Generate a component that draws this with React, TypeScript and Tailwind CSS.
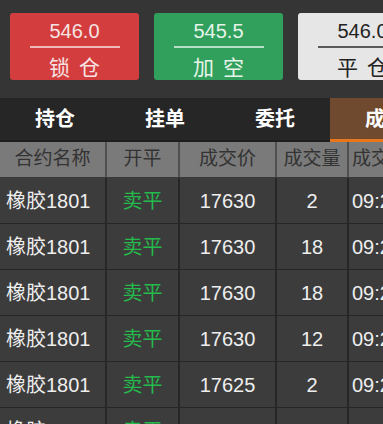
import React from 'react'

const font = { fontFamily: '"Liberation Sans", "Noto Sans CJK SC", sans-serif' }

const buttons = [
  { price: '546.0', label: '锁仓', box: 'bg-[#d43d3d] text-[#f6e4e4]', line: 'bg-[#efb9b9]' },
  { price: '545.5', label: '加空', box: 'bg-[#31a05c] text-[#e6f4ea]', line: 'bg-[#b8e0c6]' },
  { price: '546.0', label: '平仓', box: 'bg-[#e6e6e6] text-[#222222]', line: 'bg-[#5a5a5a]' },
]

const tabs = ['持仓', '挂单', '委托', '成交']

const cols = [
  { title: '合约名称', w: 'w-[107px]' },
  { title: '开平', w: 'w-[73px]' },
  { title: '成交价', w: 'w-[97px]' },
  { title: '成交量', w: 'w-[72px]' },
  { title: '成交时间', w: 'w-[110px]' },
]

const rows = [
  { name: '橡胶1801', side: '卖平', price: '17630', vol: '2', time: '09:21:05' },
  { name: '橡胶1801', side: '卖平', price: '17630', vol: '18', time: '09:21:05' },
  { name: '橡胶1801', side: '卖平', price: '17630', vol: '18', time: '09:21:05' },
  { name: '橡胶1801', side: '卖平', price: '17630', vol: '12', time: '09:21:05' },
  { name: '橡胶1801', side: '卖平', price: '17625', vol: '2', time: '09:21:04' },
  { name: '橡胶1801', side: '卖平', price: '17625', vol: '5', time: '09:21:04' },
]

export default function App() {
  return (
    <div className="w-[383px] h-[424px] overflow-hidden bg-[#353535]" style={font}>
      {/* 操作按钮 */}
      <div className="flex gap-[15px] pl-[10px] pt-[13px] h-[98px]">
        {buttons.map((b, i) => (
          <div key={i} className={`shrink-0 w-[129px] h-[67px] rounded-[3px] flex flex-col items-center ${b.box}`}>
            <div className="text-[20px] leading-none mt-[8px]">{b.price}</div>
            <div className={`w-[90px] h-[2px] mt-[5px] ${b.line}`}></div>
            <div className="text-[21px] leading-none mt-[9px] tracking-[9px] pl-[9px]">{b.label}</div>
          </div>
        ))}
      </div>

      {/* 标签页 */}
      <div className="flex h-[44px] bg-[#262626] whitespace-nowrap">
        {tabs.map((t, i) => (
          <div
            key={i}
            className={`shrink-0 w-[110px] flex items-center justify-center text-[20px] font-bold text-white ${
              i === 3 ? 'bg-[#6f4a2f] border-b-[3px] border-[#e8761c] pt-[1px]' : 'border-b-[2px] border-[#1e1e1e]'
            }`}
          >
            {t}
          </div>
        ))}
      </div>

      {/* 表头 */}
      <div className="flex h-[36px] bg-[#7a7a7a] border-b border-[#3a3a3a] whitespace-nowrap">
        {cols.map((c, i) => (
          <div
            key={i}
            className={`shrink-0 ${c.w} flex items-center ${i === 4 ? 'justify-start pl-[3px]' : 'justify-center'} text-[19px] text-[#333333] ${
              i < 4 ? 'border-r-2 border-[#505050]' : ''
            }`}
          >
            {c.title}
          </div>
        ))}
      </div>

      {/* 成交记录 */}
      {rows.map((r, ri) => (
        <div key={ri} className="flex h-[46px] bg-[#3c3c3c] border-b border-[#262626] whitespace-nowrap text-[20px] text-[#eeeeee]">
          <div className="shrink-0 w-[107px] flex items-center pl-[6px] border-r-2 border-[#272727]">{r.name}</div>
          <div className="shrink-0 w-[73px] flex items-center justify-center border-r-2 border-[#272727] text-[#25bb4c]">{r.side}</div>
          <div className="shrink-0 w-[97px] flex items-center justify-center border-r-2 border-[#272727]">{r.price}</div>
          <div className="shrink-0 w-[72px] flex items-center justify-center border-r-2 border-[#272727]">{r.vol}</div>
          <div className="shrink-0 w-[110px] flex items-center pl-[3px]">{r.time}</div>
        </div>
      ))}
    </div>
  )
}
